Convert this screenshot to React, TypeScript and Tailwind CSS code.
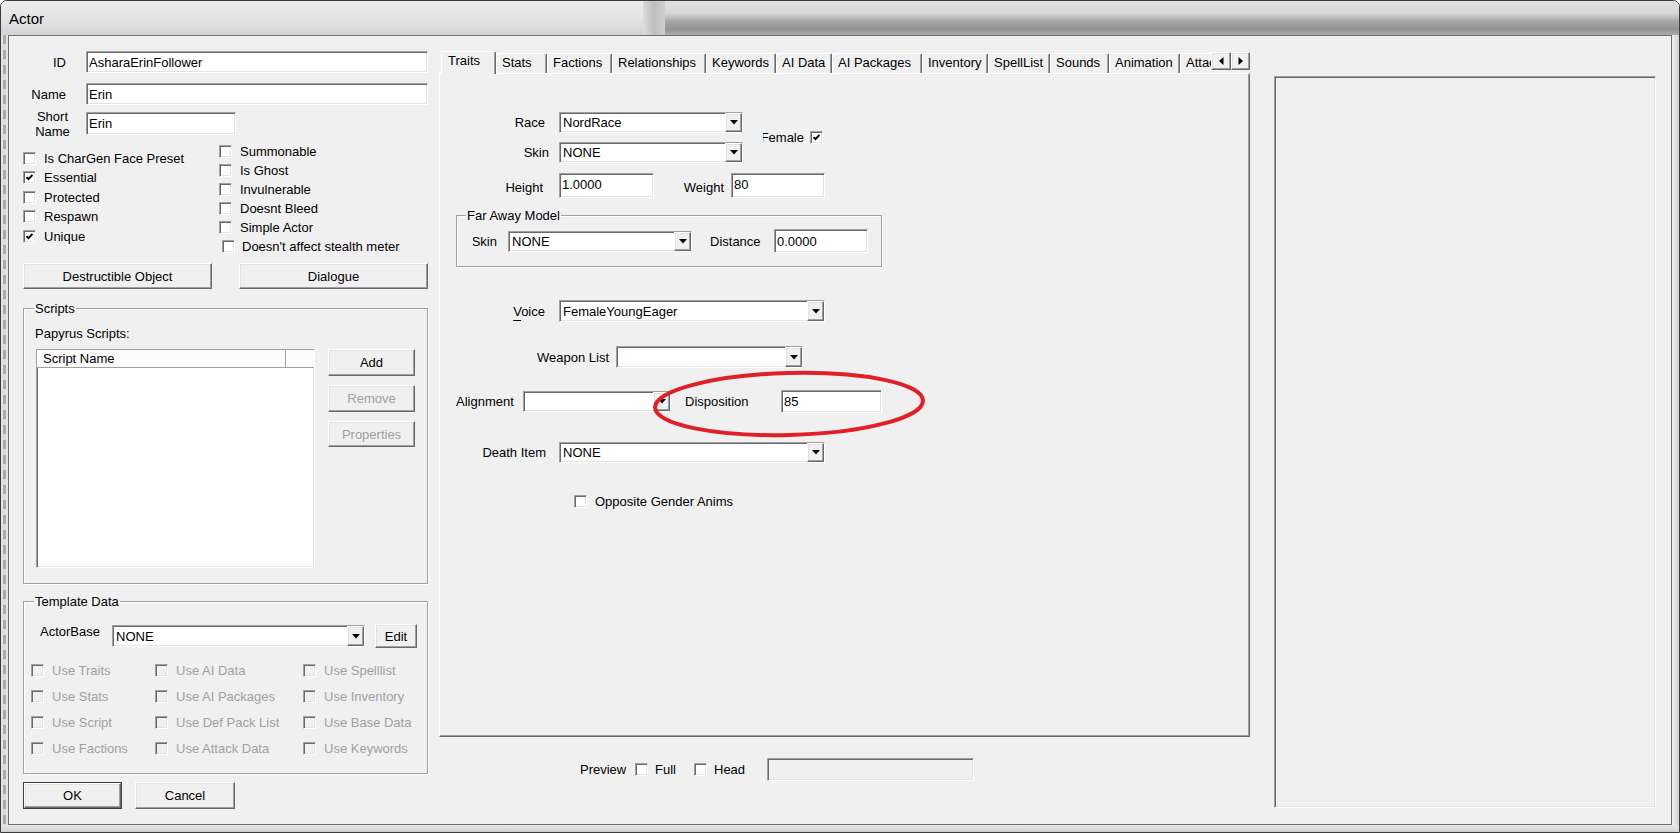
import React from "react";

const SUNKEN =
  "border border-t-[#a0a0a0] border-l-[#a0a0a0] border-r-white border-b-white shadow-[inset_1px_1px_0_#696969,inset_-1px_-1px_0_#e3e3e3]";
const RAISED =
  "border border-t-white border-l-white border-r-[#696969] border-b-[#696969] shadow-[inset_-1px_-1px_0_#a0a0a0,inset_1px_1px_0_#e3e3e3] bg-[#f0f0f0]";
const GROUP =
  "border border-[#a0a0a0] shadow-[inset_1px_1px_0_#ffffff,1px_1px_0_#ffffff]";

function DownArrow() {
  return (
    <svg width="8" height="5" viewBox="0 0 8 5">
      <path d="M0 0H8L4 4.5Z" fill="#000" />
    </svg>
  );
}

function CB({ checked = false, disabled = false }: { checked?: boolean; disabled?: boolean }) {
  return (
    <span
      className={`w-[13px] h-[13px] shrink-0 flex items-center justify-center ${SUNKEN} ${
        disabled ? "bg-[#f0f0f0]" : "bg-white"
      }`}
    >
      {checked && (
        <svg width="7" height="7" viewBox="0 0 7 7">
          <path d="M0.6 3.2 L2.5 5.2 L6.4 1" stroke="#000" strokeWidth="1.9" fill="none" />
        </svg>
      )}
    </span>
  );
}

function Combo({ className, value = "" }: { className: string; value?: string }) {
  return (
    <div className={`${SUNKEN} bg-white flex shrink-0 ${className}`}>
      <div className="flex-1 flex items-center pl-[3px] overflow-hidden whitespace-nowrap">{value}</div>
      <div className={`${RAISED} w-[17px] flex items-center justify-center shrink-0`}>
        <DownArrow />
      </div>
    </div>
  );
}

function Edit({
  className,
  value = "",
  disabled = false,
}: {
  className: string;
  value?: string;
  disabled?: boolean;
}) {
  return (
    <div
      className={`${SUNKEN} ${disabled ? "bg-[#f0f0f0]" : "bg-white"} flex items-center pl-[2px] shrink-0 overflow-hidden whitespace-nowrap ${className}`}
    >
      {value}
    </div>
  );
}

function Btn({
  className,
  children,
  disabled = false,
}: {
  className: string;
  children: React.ReactNode;
  disabled?: boolean;
}) {
  return (
    <div
      className={`${RAISED} flex items-center justify-center shrink-0 ${disabled ? "text-[#a0a0a0]" : ""} ${className}`}
    >
      {children}
    </div>
  );
}

function Tab({ label, w, selected = false, clip = false }: { label: string; w: string; selected?: boolean; clip?: boolean }) {
  return (
    <div
      className={`${w} ${
        selected ? "h-[23px] -mb-px relative z-10 pl-[6px] pt-[1px]" : "h-[20px] pl-[5px] pt-[1px]"
      } shrink-0 bg-[#f0f0f0] border-l border-t border-l-white border-t-white ${
        clip ? "" : "border-r border-r-[#696969] shadow-[inset_-1px_0_0_#a0a0a0]"
      } rounded-t-[2px] overflow-hidden whitespace-nowrap`}
    >
      {label}
    </div>
  );
}

function LeftCol() {
  const left: [string, boolean][] = [
    ["Is CharGen Face Preset", false],
    ["Essential", true],
    ["Protected", false],
    ["Respawn", false],
    ["Unique", true],
  ];
  const right = ["Summonable", "Is Ghost", "Invulnerable", "Doesnt Bleed", "Simple Actor"];
  const tmpl = [
    "Use Traits",
    "Use AI Data",
    "Use Spelllist",
    "Use Stats",
    "Use AI Packages",
    "Use Inventory",
    "Use Script",
    "Use Def Pack List",
    "Use Base Data",
    "Use Factions",
    "Use Attack Data",
    "Use Keywords",
  ];
  return (
    <div className="ml-[14px] mt-[15px] w-[405px] flex flex-col shrink-0">
      <div className="flex items-center h-[22px]">
        <div className="w-[63px] pr-[20px] text-right shrink-0">ID</div>
        <Edit className="w-[342px] h-[22px]" value="AsharaErinFollower" />
      </div>
      <div className="mt-[10px] flex items-center h-[22px]">
        <div className="w-[63px] pr-[20px] text-right shrink-0">Name</div>
        <Edit className="w-[342px] h-[22px]" value="Erin" />
      </div>
      <div className="mt-[7px] flex items-center h-[23px]">
        <div className="ml-[10px] w-[39px] mr-[14px] text-center shrink-0">
          Short
          <br />
          Name
        </div>
        <Edit className="w-[150px] h-[23px]" value="Erin" />
      </div>

      <div className="h-[128px] flex">
        <div className="w-[196px] pt-[13.5px] flex flex-col shrink-0">
          {left.map(([l, c]) => (
            <div key={l} className="h-[19.5px] flex items-center gap-[8px]">
              <CB checked={c} />
              <span>{l}</span>
            </div>
          ))}
        </div>
        <div className="pt-[7.6px] flex flex-col">
          {right.map((l) => (
            <div key={l} className="h-[18.8px] flex items-center gap-[8px]">
              <CB />
              <span>{l}</span>
            </div>
          ))}
          <div className="h-[20px] ml-[3px] flex items-center gap-[7px]">
            <CB />
            <span>Doesn't affect stealth meter</span>
          </div>
        </div>
      </div>

      <div className="h-[26px] flex justify-between">
        <Btn className="w-[189px] h-[26px]">Destructible Object</Btn>
        <Btn className="w-[189px] h-[26px]">Dialogue</Btn>
      </div>

      <fieldset className={`${GROUP} mt-[11.5px] w-[405px] pb-[15px]`}>
        <legend className="ml-[10px] px-[1px]">Scripts</legend>
        <div className="mt-[10px] pl-[11px]">Papyrus Scripts:</div>
        <div className="mt-[8.5px] flex items-start">
          <div className={`${SUNKEN} bg-white ml-[12px] w-[279px] h-[219px] flex flex-col`}>
            <div className="h-[18px] flex border-b border-[#a0a0a0] bg-[#fbfbfb] shrink-0">
              <div className="w-[249px] pl-[6px] flex items-center border-r border-[#a0a0a0]">Script Name</div>
            </div>
          </div>
          <div className="ml-[13px] flex flex-col w-[87px]">
            <Btn className="w-[87px] h-[27px]">Add</Btn>
            <Btn className="mt-[9px] w-[87px] h-[27px]" disabled>
              Remove
            </Btn>
            <Btn className="mt-[9px] w-[87px] h-[26px]" disabled>
              Properties
            </Btn>
          </div>
        </div>
      </fieldset>

      <fieldset className={`${GROUP} mt-[9.5px] w-[405px] pb-[12px]`}>
        <legend className="ml-[10px] px-[1px]">Template Data</legend>
        <div className="mt-[15.5px] flex h-[24px] items-center">
          <div className="self-start ml-[16px] w-[72px] shrink-0">ActorBase</div>
          <Combo className="w-[253px] h-[22px]" value="NONE" />
          <Btn className="ml-[10px] w-[42px] h-[24px]">Edit</Btn>
        </div>
        <div className="mt-[9px] pl-[7px] grid grid-cols-[124px_148px_1fr]">
          {tmpl.map((c) => (
            <div key={c} className="h-[26px] flex items-center gap-[8px] text-[#a0a0a0]">
              <CB disabled />
              <span>{c}</span>
            </div>
          ))}
        </div>
      </fieldset>

      <div className="mt-[8px] flex h-[27px]">
        <div className="w-[99px] h-[27px] border border-[#3c3c3c] flex">
          <div className={`${RAISED} flex-1 flex items-center justify-center`}>OK</div>
        </div>
        <Btn className="ml-[13px] w-[100px] h-[27px]">Cancel</Btn>
      </div>
    </div>
  );
}

function MiddleCol() {
  const tabs: [string, string][] = [
    ["Stats", "w-[51px]"],
    ["Factions", "w-[65px]"],
    ["Relationships", "w-[94px]"],
    ["Keywords", "w-[70px]"],
    ["AI Data", "w-[56px]"],
    ["AI Packages", "w-[90px]"],
    ["Inventory", "w-[66px]"],
    ["SpellList", "w-[62px]"],
    ["Sounds", "w-[59px]"],
    ["Animation", "w-[71px]"],
  ];
  return (
    <div className="ml-[11px] mt-[15px] w-[811px] flex flex-col shrink-0">
      <div className="h-[22px] flex items-end pl-[2px]">
        <Tab label="Traits" w="w-[55px]" selected />
        {tabs.map(([l, w]) => (
          <Tab key={l} label={l} w={w} />
        ))}
        <Tab label="Attack Data" w="w-[31px]" clip />
        <div className={`${RAISED} self-start mt-[1px] w-[20px] h-[18px] flex items-center justify-center shrink-0`}>
          <svg width="5" height="8" viewBox="0 0 5 8">
            <path d="M4.5 0V8L0 4Z" fill="#000" />
          </svg>
        </div>
        <div className={`${RAISED} self-start mt-[1px] w-[19px] h-[18px] flex items-center justify-center shrink-0`}>
          <svg width="5" height="8" viewBox="0 0 5 8">
            <path d="M0.5 0V8L5 4Z" fill="#000" />
          </svg>
        </div>
      </div>

      <div className="h-[664px] border border-t-white border-l-white border-r-[#696969] border-b-[#696969] shadow-[inset_-1px_-1px_0_#a0a0a0] flex flex-col">
        <div className="mt-[38px] flex items-center">
          <div className="flex flex-col">
            <div className="flex items-center h-[21px]">
              <div className="w-[119px] pr-[14px] text-right shrink-0">Race</div>
              <Combo className="w-[184px] h-[21px]" value="NordRace" />
            </div>
            <div className="mt-[9px] flex items-center h-[21px]">
              <div className="w-[119px] pr-[10px] text-right shrink-0">Skin</div>
              <Combo className="w-[184px] h-[21px]" value="NONE" />
            </div>
          </div>
          <div className="ml-[20px] w-[41px] overflow-hidden flex justify-end whitespace-nowrap">Female</div>
          <div className="ml-[6px]">
            <CB checked />
          </div>
        </div>

        <div className="mt-[10px] flex items-center h-[25px]">
          <div className="w-[119px] pr-[16px] pt-[3px] text-right shrink-0">Height</div>
          <Edit className="w-[95px] h-[25px] pb-[2px]" value="1.0000" />
          <div className="ml-[27px] w-[50px] pr-[7px] pt-[3px] text-right shrink-0">Weight</div>
          <Edit className="w-[94px] h-[25px] pb-[2px]" value="80" />
        </div>

        <fieldset className={`${GROUP} mt-[9.5px] ml-[16px] w-[426px] pb-[13px]`}>
          <legend className="ml-[9px] px-[1px]">Far Away Model</legend>
          <div className="mt-[6.5px] h-[24px] flex items-center">
            <div className="ml-[16px] w-[24px] overflow-hidden flex justify-end whitespace-nowrap shrink-0">Skin</div>
            <div className="w-[11px] shrink-0" />
            <Combo className="w-[184px] h-[21px]" value="NONE" />
            <div className="ml-[18px] w-[64px] shrink-0">Distance</div>
            <Edit className="w-[94px] h-[24px]" value="0.0000" />
          </div>
        </fieldset>

        <div className="mt-[33px] flex items-center h-[22px]">
          <div className="w-[119px] pr-[14px] text-right shrink-0">
            <span className="underline underline-offset-[4px]">V</span>oice
          </div>
          <Combo className="w-[266px] h-[22px]" value="FemaleYoungEager" />
        </div>

        <div className="mt-[24px] flex items-center h-[22px]">
          <div className="w-[176px] pr-[7px] text-right shrink-0">Weapon List</div>
          <Combo className="w-[187px] h-[22px]" />
        </div>

        <div className="mt-[22px] ml-[16px] flex items-center h-[23px]">
          <div className="w-[67px] shrink-0">Alignment</div>
          <Combo className="w-[148px] h-[21px]" />
          <div className="ml-[14px] w-[96px] shrink-0">Disposition</div>
          <Edit className="w-[101px] h-[23px]" value="85" />
        </div>

        <div className="mt-[29px] flex items-center h-[21px]">
          <div className="w-[119px] pr-[13px] text-right shrink-0">Death Item</div>
          <Combo className="w-[266px] h-[21px]" value="NONE" />
        </div>

        <div className="mt-[31px] ml-[134px] flex items-center h-[14px] gap-[8px]">
          <CB />
          <span>Opposite Gender Anims</span>
        </div>
      </div>

      <div className="mt-[21px] h-[23px] flex items-center pl-[141px]">
        <div className="w-[55px] shrink-0">Preview</div>
        <CB />
        <div className="ml-[7px] w-[39px] shrink-0">Full</div>
        <CB />
        <div className="ml-[7px] w-[53px] shrink-0">Head</div>
        <Edit className="w-[207px] h-[23px]" disabled />
      </div>
    </div>
  );
}

export default function App() {
  return (
    <div className="relative w-[1680px] h-[833px] overflow-hidden flex flex-col border border-[#3b3b3b] rounded-t-[7px] bg-[#dedede] font-['Liberation_Sans',Arial,sans-serif] text-[13px] leading-[15px] text-black">
      <div className="h-[34px] flex shrink-0">
        <div className="w-[642px] flex items-center pl-[8px] pt-[1px] bg-[linear-gradient(to_bottom,#ededed,#e3e3e3_55%,#d3d3d3)] text-[15px] leading-[18px]">
          Actor
        </div>
        <div className="w-[22px] bg-[linear-gradient(to_right,#dcdcdc,#bdbdbd_50%,#cfcfcf)]" />
        <div className="flex-1 bg-[linear-gradient(to_bottom,#e0e0e0,#d8d8d8_35%,#a4a4a4_62%,#939393_82%,#ababab)]" />
      </div>

      <div className="flex-1 flex min-h-0">
        <div className="w-[7px] bg-[#e3e3e3] flex shrink-0">
          <div className="ml-[2px] w-[3px] bg-[repeating-linear-gradient(to_bottom,#ababab_0px,#ababab_9px,#dadada_9px,#dadada_15px)]" />
        </div>
        <div className="flex-1 border border-[#6f6f6f] bg-[#f0f0f0] flex items-start">
          <LeftCol />
          <MiddleCol />
          <div className={`${SUNKEN} bg-[#f0f0f0] ml-[24px] mt-[40px] w-[382px] h-[732px] shrink-0`} />
        </div>
        <div className="w-[7px] bg-[linear-gradient(to_right,#f2f2f2,#d2d2d2)] shrink-0" />
      </div>
      <div className="h-[7px] shrink-0 bg-[linear-gradient(to_bottom,#e8e8e8,#d0d0d0)]" />

      <svg
        className="absolute left-[650px] top-[366px] pointer-events-none"
        width="280"
        height="76"
        viewBox="0 0 280 76"
      >
        <ellipse
          cx="138"
          cy="37"
          rx="134"
          ry="31"
          fill="none"
          stroke="#e11f27"
          strokeWidth="4"
          transform="rotate(-1.5 138 37)"
        />
      </svg>
    </div>
  );
}
